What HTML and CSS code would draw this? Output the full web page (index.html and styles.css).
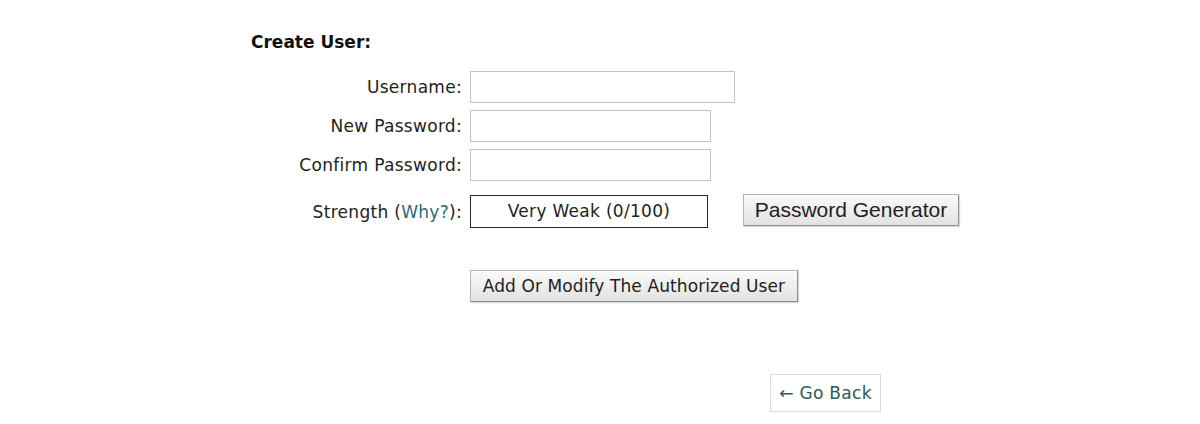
FILE: index.html
```html
<!DOCTYPE html>
<html>
<head>
<meta charset="utf-8">
<link rel="stylesheet" href="styles.css">
</head>
<body>
<div class="page">
  <h2 class="title">Create User:</h2>
  <div class="form">
    <label class="lbl">Username:</label>
    <div class="ctl"><input class="field wide" type="text"></div>
    <label class="lbl">New Password:</label>
    <div class="ctl"><input class="field" type="password"></div>
    <label class="lbl">Confirm Password:</label>
    <div class="ctl"><input class="field" type="password"></div>
    <label class="lbl strength-lbl">Strength (<a class="why" href="#">Why?</a>):</label>
    <div class="ctl strength-ctl">
      <div class="meter">Very Weak (0/100)</div>
      <button class="btn gen" type="button">Password Generator</button>
    </div>
    <div class="spacer"></div>
    <div class="ctl submit-ctl">
      <button class="btn add" type="button">Add Or Modify The Authorized User</button>
    </div>
  </div>
  <div class="back-row">
    <a class="back" href="#">&larr; Go Back</a>
  </div>
</div>
</body>
</html>
```
FILE: styles.css
```css
html, body {
  margin: 0;
  padding: 0;
  background: #ffffff;
}
body {
  font-family: "DejaVu Sans", Verdana, sans-serif;
  font-size: 17px;
  line-height: 20px;
  color: #222222;
  letter-spacing: 0.3px;
}
.page {
  padding: 32px 0 0 251px;
}
.title {
  margin: 0;
  font-size: 17px;
  line-height: 20px;
  font-weight: bold;
  color: #111111;
  letter-spacing: 0;
}
.form {
  margin-top: 19px;
  display: grid;
  grid-template-columns: 211px auto;
  column-gap: 8px;
  row-gap: 7px;
  align-items: center;
}
.lbl {
  text-align: right;
  white-space: nowrap;
}
.ctl {
  display: flex;
  align-items: center;
}
.field {
  box-sizing: border-box;
  width: 241px;
  height: 32px;
  border: 1px solid #c4c4c4;
  background: #ffffff;
  margin: 0;
  padding: 0 4px;
  font: inherit;
}
.field.wide {
  width: 265px;
}
.strength-lbl, .strength-ctl {
  margin-top: 7px;
}
.why {
  color: #2b6a7a;
  text-decoration: none;
}
.meter {
  box-sizing: border-box;
  width: 238px;
  height: 33px;
  border: 1px solid #2a2a2a;
  background: #ffffff;
  text-align: center;
  line-height: 31px;
  color: #222222;
}
.btn {
  box-sizing: border-box;
  margin: 0;
  height: 32px;
  border: 1px solid #b4b4b4;
  border-right-color: #8f8f8f;
  border-bottom-color: #8f8f8f;
  background: linear-gradient(#fafafa, #e2e2e2);
  box-shadow: 1px 1px 1px rgba(0, 0, 0, 0.15);
  color: #222222;
  cursor: pointer;
  white-space: nowrap;
}
.gen {
  margin-left: 35px;
  align-self: flex-start;
  margin-top: -1px;
  padding: 0;
  font-family: "Liberation Sans", Arial, sans-serif;
  font-size: 21px;
  line-height: 24px;
  letter-spacing: 0;
  width: 216px;
  text-align: center;
}
.add {
  padding: 0;
  font-family: "DejaVu Sans", Verdana, sans-serif;
  font-size: 17px;
  line-height: 20px;
  letter-spacing: 0.1px;
  width: 328px;
  text-align: center;
}
.spacer {
  height: 1px;
}
.submit-ctl {
  margin-top: 35px;
}
.back-row {
  margin-top: 72px;
  padding-left: 519px;
}
.back {
  display: inline-block;
  box-sizing: border-box;
  width: 111px;
  height: 38px;
  padding: 8px 0;
  border: 1px solid #dadada;
  background: #ffffff;
  color: #2c5a5c;
  text-decoration: none;
  text-align: center;
  line-height: 20px;
  white-space: nowrap;
}
```
